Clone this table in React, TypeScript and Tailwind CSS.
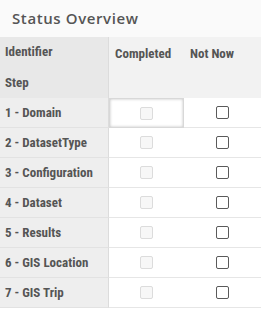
import React from "react";

const steps = [
  "1 - Domain",
  "2 - DatasetType",
  "3 - Configuration",
  "4 - Dataset",
  "5 - Results",
  "6 - GIS Location",
  "7 - GIS Trip",
];

const cellFont = { fontFamily: "'Roboto Condensed', 'DejaVu Sans Condensed', Roboto, sans-serif" };

function Box({ disabled }: { disabled?: boolean }) {
  return (
    <span
      className={
        disabled
          ? "block w-[13px] h-[13px] rounded-[2px] border border-[#dcdcdc] bg-[#f7f7f7]"
          : "block w-[13px] h-[13px] rounded-[2px] border border-[#5a5a5a] bg-white"
      }
    />
  );
}

export default function App() {
  return (
    <div className="w-[261px] h-[309px] overflow-hidden bg-white text-[#555]">
      <div className="h-[37px] bg-[#fafafa] flex items-center pl-[12px]">
        <h1
          className="text-[15px] font-semibold text-[#555] tracking-[0.6px]"
          style={{ fontFamily: "'Open Sans', sans-serif" }}
        >
          Status Overview
        </h1>
      </div>

      <div className="grid grid-cols-[109px_75px_77px] text-[13px] font-bold" style={cellFont}>
        {/* header */}
        <div className="bg-[#e8e8e8] border-r border-[#dcdcdc] flex flex-col">
          <div className="h-[30px] flex items-center pl-[5px]">Identifier</div>
          <div className="h-[31px] flex items-center pl-[5px]">Step</div>
        </div>
        <div className="bg-[#f2f2f2] h-[61px] flex items-start pt-[7px] pl-[6px]">Completed</div>
        <div className="bg-[#f2f2f2] h-[61px] flex items-start pt-[7px] pl-[6px]">Not Now</div>

        {steps.map((s, i) => (
          <React.Fragment key={s}>
            <div className="h-[30px] bg-[#eeeeee] border-r border-[#dcdcdc] border-b border-b-[#e2e2e2] flex items-center pl-[5px]">
              {s}
            </div>
            <div
              className={
                i === 0
                  ? "h-[30px] flex items-center justify-center bg-white shadow-[inset_0_0_3px_rgba(0,0,0,0.25)] border border-[#d8d8d8]"
                  : "h-[30px] flex items-center justify-center border-b border-[#e6e6e6]"
              }
            >
              <Box disabled />
            </div>
            <div className="h-[30px] flex items-center justify-center border-b border-[#e6e6e6]">
              <Box />
            </div>
          </React.Fragment>
        ))}
      </div>
    </div>
  );
}
